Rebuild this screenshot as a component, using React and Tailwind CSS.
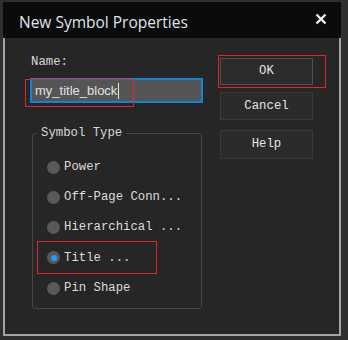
const mono = { fontFamily: '"Liberation Mono", "DejaVu Sans Mono", monospace' };

const types = [
  { label: "Power" },
  { label: "Off-Page Conn..." },
  { label: "Hierarchical ..." },
  { label: "Title ...", checked: true },
  { label: "Pin Shape" },
];

function Radio({ checked }) {
  return (
    <span className="flex h-[13px] w-[13px] shrink-0 items-center justify-center rounded-full bg-[#595959]">
      {checked && <span className="h-[6px] w-[6px] rounded-full bg-[#1aa0f5]" />}
    </span>
  );
}

export default function App() {
  return (
    <div className="relative h-[340px] w-[348px] bg-[#2f2f2f] pl-[3px] pt-[2px]">
      <div className="flex h-[334px] w-[338px] flex-col">
        <div className="flex h-[36px] items-center justify-between bg-[#0b0b0b] pl-[16px] pr-[14px]">
          <span
            className="pt-[5px] text-[15.5px] text-[#dfe5ee]"
            style={{ fontFamily: '"Open Sans", "Noto Sans", sans-serif' }}
          >
            New Symbol Properties
          </span>
          <svg width="12" height="12" viewBox="0 0 12 12" className="mb-[2px]">
            <path d="M1.5 1.5 L10.5 10.5 M10.5 1.5 L1.5 10.5" stroke="#f2f2f2" strokeWidth="2.4" />
          </svg>
        </div>

        <div className="flex flex-1 border-x-2 border-b-2 border-[#a3a3a3] bg-[#262626] pl-[25px] pt-[16px]" style={mono}>
          <div className="flex w-[173px] flex-col">
            <div className="h-[16px] pl-[1px] text-[12.3px] leading-[16px] text-[#d8d8d8]">Name:</div>
            <div className="mt-[8px] flex h-[25px] items-center border-2 border-[#1184d6] bg-[#555555] pl-[3px]">
              <span
                className="text-[13px] text-[#e2e2e2]"
                style={{ fontFamily: '"Liberation Sans", Arial, sans-serif' }}
              >
                my_title_block
              </span>
              <span className="ml-[1px] h-[16px] w-px bg-[#e6e6e6]" />
            </div>

            <fieldset className="ml-[2px] mt-[22px] h-[184px] w-[170px] rounded-[3px] border border-[#474747]">
              <legend className="ml-[4px] px-[4px] text-[12.3px] leading-[16px] text-[#d8d8d8]">Symbol Type</legend>
              <div className="flex flex-col pl-[14px] pt-[11px]">
                {types.map((t) => (
                  <div key={t.label} className="flex h-[30.25px] items-center gap-[4px]">
                    <Radio checked={t.checked} />
                    <span className="text-[12.3px] text-[#dcdcdc]">{t.label}</span>
                  </div>
                ))}
              </div>
            </fieldset>
          </div>

          <div className="ml-[17px] mt-[4px] flex w-[93px] flex-col">
            <button className="h-[27px] border border-[#505050] bg-[#2c2c2c] text-[12.3px] text-[#e4e4e4]">OK</button>
            <button className="mt-[7px] h-[28px] border border-[#3a3a3a] bg-[#2b2b2b] text-[12.3px] text-[#e4e4e4]">Cancel</button>
            <button className="mt-[10px] h-[29px] border border-[#3a3a3a] bg-[#2b2b2b] text-[12.3px] text-[#e4e4e4]">Help</button>
          </div>
        </div>
      </div>

      <div className="pointer-events-none absolute left-[218px] top-[55px] h-[33px] w-[108px] border border-[#e0252b]" />
      <div className="pointer-events-none absolute left-[25px] top-[79px] h-[28px] w-[109px] border border-[#e0252b]" />
      <div className="pointer-events-none absolute left-[37px] top-[241px] h-[33px] w-[120px] border border-[#e0252b]" />
    </div>
  );
}
